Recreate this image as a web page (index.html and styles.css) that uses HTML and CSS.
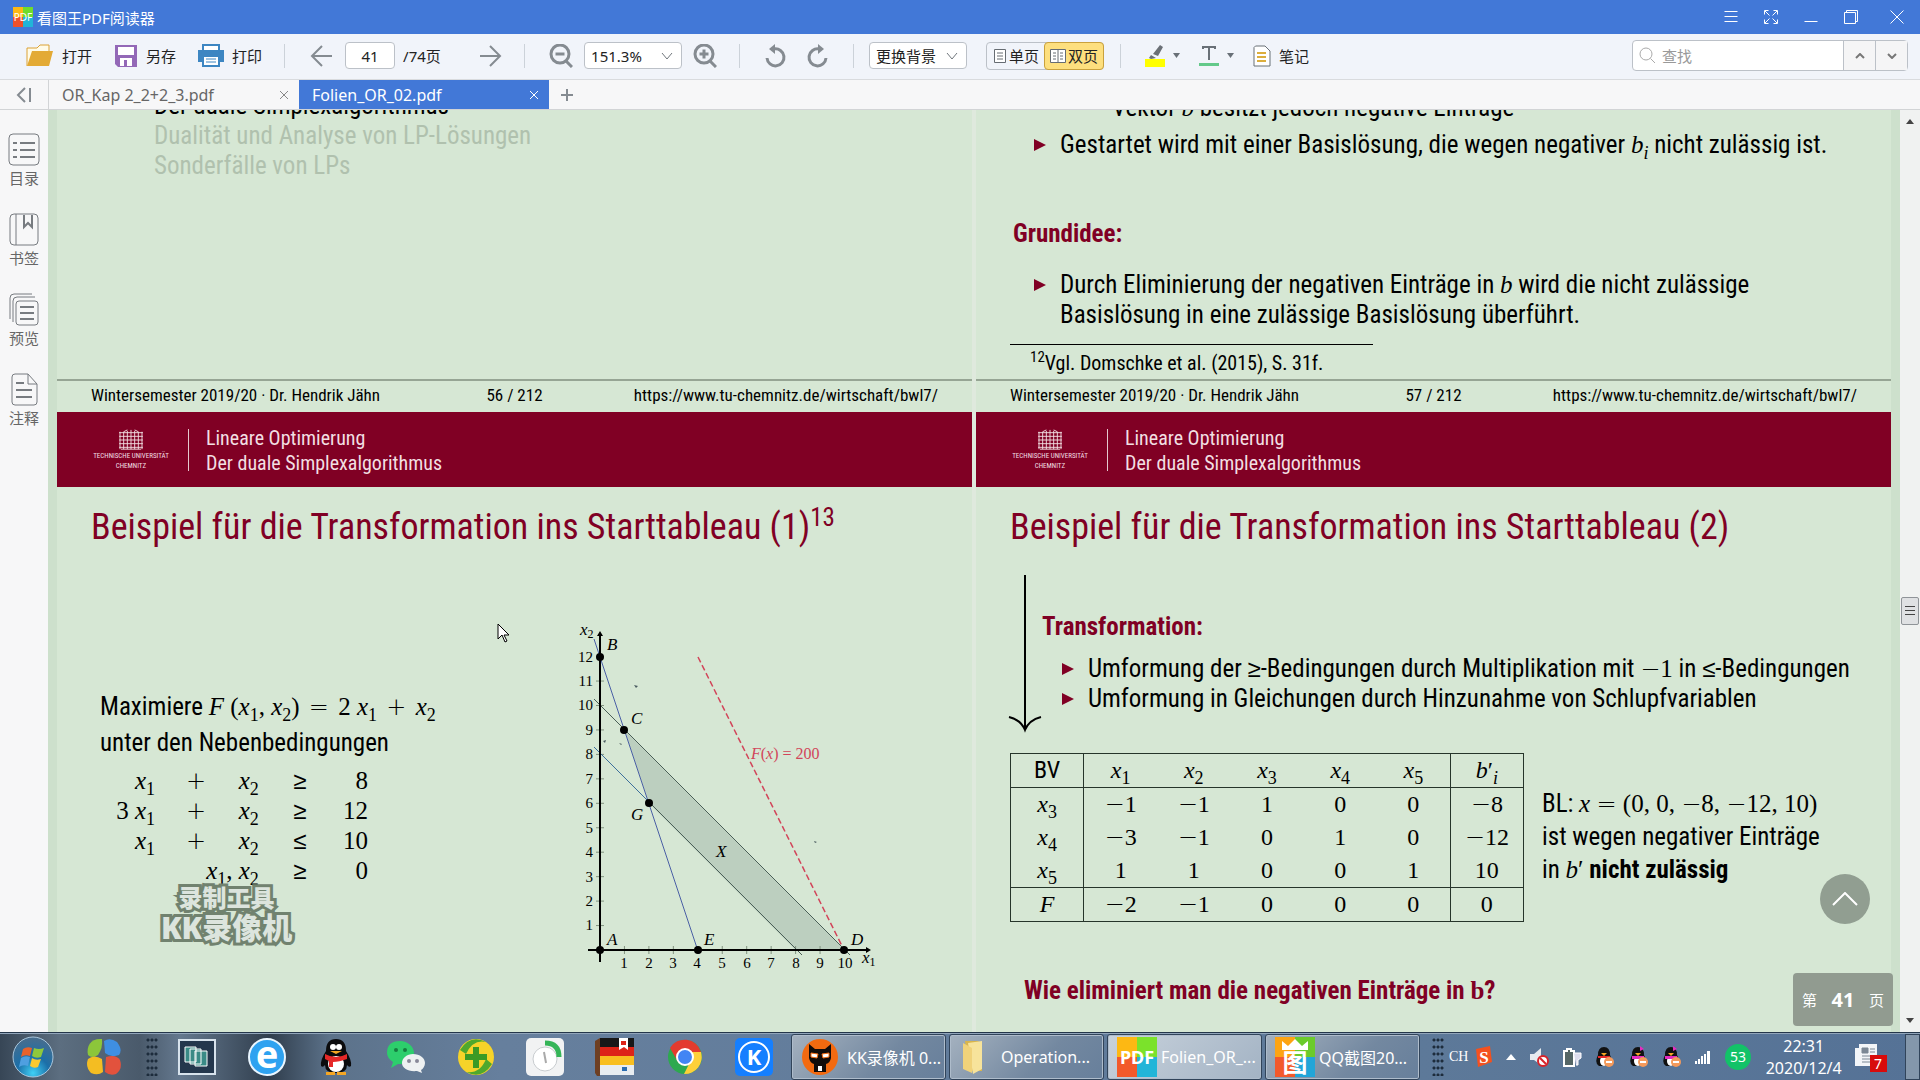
FILE: index.html
```html
<!DOCTYPE html>
<html lang="zh-CN">
<head>
    <meta charset="UTF-8">
    <meta name="viewport" content="width=device-width, initial-scale=1.0">
    <title>看图王PDF阅读器</title>
    <link rel="stylesheet" href="styles.css">
</head>
<body>
    <header class="titlebar">
        <svg class="app-icon" width="20" height="20" viewBox="0 0 20 20">
            <rect width="10" height="10" fill="#fdb813"/><rect x="10" width="10" height="10" fill="#6fdc2c"/>
            <rect y="10" width="10" height="10" fill="#f0512b"/><rect x="10" y="10" width="10" height="10" fill="#22b5d8"/>
            <text x="10" y="14" text-anchor="middle" font-size="10" fill="#fff">PDF</text>
        </svg>
        <h1>看图王PDF阅读器</h1>
        <div class="window-buttons">
            <button aria-label="菜单"><svg width="16" height="16" viewBox="0 0 16 16"><path d="M1.500 2.500h13M1.500 7.500h13M1.500 12.500h13"/></svg></button>
            <button aria-label="全屏"><svg width="16" height="16" viewBox="0 0 16 16"><path d="M1.500 5.500v-4h4M10.500 1.500h4v4M14.500 10.500v4h-4M5.500 14.500h-4v-4M2 2l4.500 4.500M14 2L9.500 6.500M2 14l4.500-4.500M14 14L9.500 9.500"/></svg></button>
            <button aria-label="最小化"><svg width="16" height="16" viewBox="0 0 16 16"><path d="M1.500 12.500h13"/></svg></button>
            <button aria-label="还原"><svg width="16" height="16" viewBox="0 0 16 16"><path d="M1.500 3.500h11v11h-11zM3.500 3.500v-2h11v11h-2"/></svg></button>
            <button class="close" aria-label="关闭"><svg width="16" height="16" viewBox="0 0 16 16"><path d="M1.500 1.500l13 13M14.500 1.500l-13 13"/></svg></button>
        </div>
    </header>

    <div class="toolbar">
        <button class="tool tool-file"><svg width="28" height="24" viewBox="0 0 28 24"><path d="M1 22V4h10l3-3h9v6" fill="#fffbe8" stroke="#dba235"/><path d="M6 7h21l-4 15H1z" fill="#e3aa35"/></svg>打开</button>
        <button class="tool tool-file"><svg width="24" height="24" viewBox="0 0 24 24"><path d="M1 1h22v22H4l-3-3z" fill="#9368b7"/><path d="M4 3h16v8H4z" fill="#fff"/><path d="M6 14h12v8H6z" fill="#fff"/><path d="M10 16h3v6h-3z" fill="#9368b7"/></svg>另存</button>
        <button class="tool tool-file"><svg width="26" height="24" viewBox="0 0 26 24"><path d="M5 6V1h16v5" fill="#fff" stroke="#3d86c2" stroke-width="2"/><path d="M0 6h26v12H0z" fill="#3d86c2"/><path d="M5 12h16v10H5z" fill="#fff" stroke="#3d86c2" stroke-width="2"/><path d="M8 15h10M8 18h10" stroke="#3d86c2"/></svg>打印</button>
        <span class="sep sep-file"></span>
        <button class="tool prev" aria-label="上一页"><svg class="line" width="24" height="24" viewBox="0 0 24 24"><path d="M12 2L2 12l10 10M2 12h20"/></svg></button>
        <label class="page-number"><input type="text" value="41" aria-label="页码"><span>/74页</span></label>
        <button class="tool next" aria-label="下一页"><svg class="line" width="24" height="24" viewBox="0 0 24 24"><path d="M12 2l10 10-10 10M22 12H2"/></svg></button>
        <span class="sep sep-next"></span>
        <button class="tool" aria-label="缩小"><svg class="line thick" width="24" height="24" viewBox="0 0 24 24"><circle cx="11" cy="10" r="9"/><path d="M6.500 10h9M17 17l6 6"/></svg></button>
        <span class="select-wrap">
            <select aria-label="缩放比例"><option>151.3%</option></select>
            <svg width="12" height="8" viewBox="0 0 12 8"><path d="M1 1l5 6 5-6"/></svg>
        </span>
        <button class="tool" aria-label="放大"><svg class="line thick" width="24" height="24" viewBox="0 0 24 24"><circle cx="11" cy="10" r="9"/><path d="M6.500 10h9M11 5.500v9M17 17l6 6"/></svg></button>
        <span class="sep sep-zoom"></span>
        <button class="tool rotate" aria-label="向左旋转"><svg class="line thick" width="22" height="24" viewBox="0 0 22 24"><path d="M9 5a8.500 8.500 0 1 1-7 9"/><path class="solid" d="M10 0v10L4 5z"/></svg></button>
        <button class="tool rotate" aria-label="向右旋转"><svg class="line thick" width="22" height="24" viewBox="0 0 22 24"><path d="M13 5a8.500 8.500 0 1 0 7 9"/><path class="solid" d="M12 0v10l6-5z"/></svg></button>
        <span class="sep sep-rotate"></span>
        <span class="select-wrap">
            <select aria-label="更换背景"><option>更换背景</option></select>
            <svg width="12" height="8" viewBox="0 0 12 8"><path d="M1 1l5 6 5-6"/></svg>
        </span>
        <div class="page-mode">
            <button><svg width="14" height="16" viewBox="0 0 14 16"><path d="M1.500 1.500h11v13h-11zM4 5h6M4 8h6M4 11h6"/></svg>单页</button>
            <button class="active"><svg width="16" height="16" viewBox="0 0 16 16"><path d="M.5 1.500h15v13H.5zM8 1.500v13M3 5h3M3 8h3M3 11h3M10 5h3M10 8h3M10 11h3"/></svg>双页</button>
        </div>
        <span class="sep sep-mode"></span>
        <button class="tool mark" aria-label="高亮"><svg width="20" height="24" viewBox="0 0 20 24"><path d="M8 10l7-9 3 2-5 9zM6 11l5 3-5 1-2-1z" fill="#6b7076"/><path d="M0 15h20v8H0z" fill="#ff0"/></svg><svg width="7" height="5" viewBox="0 0 7 5"><path d="M0 0h7L3.500 5z" fill="#697077"/></svg></button>
        <button class="tool mark" aria-label="文字"><svg width="20" height="24" viewBox="0 0 20 24"><path d="M4 5V3h12v2M10 3v13" fill="none" stroke="#697077" stroke-width="2"/><path d="M0 19h20v3H0z" fill="#63c98a"/></svg><svg width="7" height="5" viewBox="0 0 7 5"><path d="M0 0h7L3.500 5z" fill="#697077"/></svg></button>
        <button class="tool note"><svg width="18" height="22" viewBox="0 0 18 22"><path d="M1 2.500L2.500 1H12l5 5v15H1z" fill="#fff" stroke="#697077"/><path d="M4 8h9M4 12h9M4 16h9" stroke="#dcae3c" stroke-width="2"/></svg>笔记</button>
        <div class="search">
            <svg width="17" height="17" viewBox="0 0 17 17"><circle cx="7" cy="7" r="6"/><path d="M11.500 11.500L16 16"/></svg>
            <input type="text" placeholder="查找" aria-label="查找">
            <button aria-label="上一个"><svg width="10" height="6" viewBox="0 0 10 6"><path d="M1 5l4-4 4 4"/></svg></button>
            <button aria-label="下一个"><svg width="10" height="6" viewBox="0 0 10 6"><path d="M1 1l4 4 4-4"/></svg></button>
        </div>
    </div>

    <nav class="tabs">
        <button class="collapse" aria-label="收起"><svg class="line" width="16" height="16" viewBox="0 0 16 16"><path d="M9 1L2 8l7 7M14 1v14"/></svg></button>
        <div class="tab"><a href="#">OR_Kap 2_2+2_3.pdf</a><button aria-label="关闭标签"><svg width="10" height="10" viewBox="0 0 10 10"><path d="M1 1l8 8M9 1L1 9"/></svg></button></div>
        <div class="tab active"><a href="#">Folien_OR_02.pdf</a><button aria-label="关闭标签"><svg width="10" height="10" viewBox="0 0 10 10"><path d="M1 1l8 8M9 1L1 9"/></svg></button></div>
        <button class="new-tab" aria-label="新标签"><svg class="line" width="14" height="14" viewBox="0 0 14 14"><path d="M7 1v12M1 7h12"/></svg></button>
    </nav>

    <main>
        <aside class="sidebar">
            <button><svg width="32" height="34" viewBox="0 0 32 34"><rect x="1" y="1" width="30" height="31" rx="4"/><path class="bold" d="M5 10h4M5 17h4M5 24h4M12 10h15M12 17h15M12 24h15"/></svg>目录</button>
            <button><svg width="32" height="34" viewBox="0 0 32 34"><rect x="2" y="1" width="28" height="31" rx="4"/><path d="M8 1v31"/><path class="bold" d="M16 2v12l4-4 4 4V2"/></svg>书签</button>
            <button><svg width="32" height="34" viewBox="0 0 32 34"><rect x="8" y="8" width="22" height="24" rx="3"/><path d="M5 29V8q0-4 4-4h18M2 26V5q0-4 4-4h18"/><path class="bold" d="M12 14h14M12 20h14M12 26h14"/></svg>预览</button>
            <button><svg width="32" height="34" viewBox="0 0 32 34"><path d="M7 1h13l9 10v18q0 3-3 3H7q-3 0-3-3V4q0-3 3-3zM20 1v10h9"/><path class="bold" d="M8 10h8M8 17h16M8 24h16"/></svg>注释</button>
        </aside>

        <div class="viewer">
            <div class="slides">
                <section class="slide">
                    <div class="outline">
                        <p class="current">Der duale Simplexalgorithmus</p>
                        <p>Dualität und Analyse von LP-Lösungen</p>
                        <p>Sonderfälle von LPs</p>
                    </div>
                    <footer class="slide-footer"><span>Wintersemester 2019/20 · Dr. Hendrik Jähn</span><span>56 / 212</span><a href="#">https://www.tu-chemnitz.de/wirtschaft/bwl7/</a></footer>
                </section>

                <section class="slide">
                    <div class="idea">
                        <p class="nested">Vektor <i>b</i> besitzt jedoch negative Einträge</p>
                        <ul><li>Gestartet wird mit einer Basislösung, die wegen negativer <i>b<sub>i</sub></i> nicht zulässig ist.</li></ul>
                        <h3>Grundidee:</h3>
                        <ul><li>Durch Eliminierung der negativen Einträge in <i>b</i> wird die nicht zulässige<br>Basislösung in eine zulässige Basislösung überführt.</li></ul>
                        <p class="footnote"><sup>12</sup>Vgl. Domschke et al. (2015), S. 31f.</p>
                    </div>
                    <footer class="slide-footer"><span>Wintersemester 2019/20 · Dr. Hendrik Jähn</span><span>57 / 212</span><a href="#">https://www.tu-chemnitz.de/wirtschaft/bwl7/</a></footer>
                </section>

                <section class="slide slide-example">
                    <header class="slide-header">
                        <div class="uni"><svg width="28" height="24" viewBox="0 0 28 24"><path d="M1 4h26M1 8h26M1 12h26M1 16h26M1 20h26M2 3v19M6 3v19M10 2v20M14 1v21M18 2v20M22 3v19M26 3v19M6 3l4-2M18 1l4 2M3 22h22"/></svg><span>TECHNISCHE UNIVERSITÄT<br>CHEMNITZ</span></div>
                        <p>Lineare Optimierung<br>Der duale Simplexalgorithmus</p>
                    </header>
                    <h2>Beispiel für die Transformation ins Starttableau (1)<sup>13</sup></h2>
                    <div class="example">
                        <div class="model">
                            <p>Maximiere <span class="math"><i>F</i> (<i>x</i><sub>1</sub>, <i>x</i><sub>2</sub>) <span class="op">=</span> 2 <i>x</i><sub>1</sub> <span class="op">+</span> <i>x</i><sub>2</sub></span></p>
                            <p>unter den Nebenbedingungen</p>
                            <table class="constraints math">
                                <tr><td><i>x</i><sub>1</sub></td><td class="rel">+</td><td><i>x</i><sub>2</sub></td><td class="rel">≥</td><td>8</td></tr>
                                <tr><td>3 <i>x</i><sub>1</sub></td><td class="rel">+</td><td><i>x</i><sub>2</sub></td><td class="rel">≥</td><td>12</td></tr>
                                <tr><td><i>x</i><sub>1</sub></td><td class="rel">+</td><td><i>x</i><sub>2</sub></td><td class="rel">≤</td><td>10</td></tr>
                                <tr><td colspan="3"><i>x</i><sub>1</sub>, <i>x</i><sub>2</sub></td><td class="rel">≥</td><td>0</td></tr>
                            </table>
                        </div>
                        <!-- one unit on either axis is 24.45, origin at (30, 330) -->
                        <svg class="chart" width="310" height="360" viewBox="0 0 310 360">
                            <path d="M54.450 110L78.900 183.300 225.600 330H274.500z" fill="#bccfbf"/>
                            <g class="ticks">
                                <path d="M54.450 326v8M78.900 326v8M103.350 326v8M127.800 326v8M152.250 326v8M176.700 326v8M201.150 326v8M225.600 326v8M250.050 326v8M274.500 326v8"/>
                                <path d="M26 305.550h8M26 281.100h8M26 256.650h8M26 232.200h8M26 207.750h8M26 183.300h8M26 158.850h8M26 134.400h8M26 109.950h8M26 85.500h8M26 61.050h8M26 36.600h8"/>
                            </g>
                            <path d="M24 79L280 335M24 127L232 335" stroke="#4a5f57"/>
                            <path d="M24 127L79 182" stroke="#3c6f9b"/>
                            <path d="M24 19L129 334" stroke="#4a5fa5"/>
                            <path d="M128 37L276 334" stroke="#d2455a" stroke-width="1.500" stroke-dasharray="6 3"/>
                            <path d="M18 330H297M30 342V15" stroke="#000" stroke-width="2"/>
                            <path d="M296 327l5 3-5 3zM27 16l3-5 3 5z"/>
                            <circle cx="30" cy="330" r="4"/><circle cx="30" cy="37" r="4"/><circle cx="54" cy="110" r="4"/>
                            <circle cx="79" cy="183" r="4"/><circle cx="128" cy="330" r="4"/><circle cx="274" cy="330" r="4"/>
                            <g class="numbers" text-anchor="middle">
                                <text x="54" y="348">1</text><text x="79" y="348">2</text><text x="103" y="348">3</text><text x="127" y="348">4</text><text x="152" y="348">5</text><text x="177" y="348">6</text><text x="201" y="348">7</text><text x="226" y="348">8</text><text x="250" y="348">9</text><text x="275" y="348">10</text>
                            </g>
                            <g class="numbers" text-anchor="end">
                                <text x="23" y="310">1</text><text x="23" y="286">2</text><text x="23" y="262">3</text><text x="23" y="237">4</text><text x="23" y="213">5</text><text x="23" y="188">6</text><text x="23" y="164">7</text><text x="23" y="139">8</text><text x="23" y="115">9</text><text x="23" y="90">10</text><text x="23" y="66">11</text><text x="23" y="42">12</text>
                            </g>
                            <g class="points">
                                <text x="10" y="15">x<tspan class="index" dy="3">2</tspan></text><text x="292" y="343">x<tspan class="index" dy="3">1</tspan></text>
                                <text x="37" y="30">B</text><text x="61" y="104">C</text><text x="61" y="200">G</text><text x="37" y="325">A</text><text x="134" y="325">E</text><text x="281" y="325">D</text><text x="146" y="237">X</text>
                            </g>
                            <text class="goal" x="181" y="139"><tspan font-style="italic">F</tspan>(<tspan font-style="italic">x</tspan>) = 200</text>
                            <path d="M64 65l4 1-2 2zM33 121l3-1-1 3zM49 123l3 1-1 1zM244 221l3 1-2 1z" fill="#4b5c60"/>
                        </svg>
                    </div>
                </section>

                <section class="slide slide-example">
                    <header class="slide-header">
                        <div class="uni"><svg width="28" height="24" viewBox="0 0 28 24"><path d="M1 4h26M1 8h26M1 12h26M1 16h26M1 20h26M2 3v19M6 3v19M10 2v20M14 1v21M18 2v20M22 3v19M26 3v19M6 3l4-2M18 1l4 2M3 22h22"/></svg><span>TECHNISCHE UNIVERSITÄT<br>CHEMNITZ</span></div>
                        <p>Lineare Optimierung<br>Der duale Simplexalgorithmus</p>
                    </header>
                    <h2>Beispiel für die Transformation ins Starttableau (2)</h2>
                    <div class="transformation">
                        <svg width="34" height="158" viewBox="0 0 34 158"><path d="M17 0v154M1 142q12 3 16 13 4-10 16-13"/></svg>
                        <div>
                            <h3>Transformation:</h3>
                            <ul>
                                <li>Umformung der <span class="math"><span class="sign">≥</span></span>-Bedingungen durch Multiplikation mit <span class="math"><span class="sign">−</span>1</span> in <span class="math"><span class="sign">≤</span></span>-Bedingungen</li>
                                <li>Umformung in Gleichungen durch Hinzunahme von Schlupfvariablen</li>
                            </ul>
                        </div>
                    </div>
                    <div class="result">
                        <table class="tableau math">
                            <tr class="ruled"><th class="basis">BV</th><th><i>x</i><sub>1</sub></th><th><i>x</i><sub>2</sub></th><th><i>x</i><sub>3</sub></th><th><i>x</i><sub>4</sub></th><th><i>x</i><sub>5</sub></th><th><i>b</i>′<sub><i>i</i></sub></th></tr>
                            <tr><td><i>x</i><sub>3</sub></td><td><span class="sign">−</span>1</td><td><span class="sign">−</span>1</td><td>1</td><td>0</td><td>0</td><td><span class="sign">−</span>8</td></tr>
                            <tr><td><i>x</i><sub>4</sub></td><td><span class="sign">−</span>3</td><td><span class="sign">−</span>1</td><td>0</td><td>1</td><td>0</td><td><span class="sign">−</span>12</td></tr>
                            <tr class="ruled"><td><i>x</i><sub>5</sub></td><td>1</td><td>1</td><td>0</td><td>0</td><td>1</td><td>10</td></tr>
                            <tr><td><i>F</i></td><td><span class="sign">−</span>2</td><td><span class="sign">−</span>1</td><td>0</td><td>0</td><td>0</td><td>0</td></tr>
                        </table>
                        <p>BL: <span class="math"><i>x</i> <span class="sign">=</span> (0, 0, <span class="sign">−</span>8, <span class="sign">−</span>12, 10)</span><br>ist wegen negativer Einträge<br>in <span class="math"><i>b</i>′</span> <strong>nicht zulässig</strong></p>
                    </div>
                    <h3 class="question">Wie eliminiert man die negativen Einträge in <span class="math">b</span>?</h3>
                </section>
            </div>

            <div class="watermark"><span>录制工具</span><strong>KK录像机</strong></div>
            <svg class="cursor" width="13" height="20" viewBox="0 0 13 20"><path d="M1 1v15l4-4 3 7 2-1-3-6h5z" fill="#fff" stroke="#000"/></svg>
            <button class="to-top" aria-label="回到顶部"><svg width="26" height="14" viewBox="0 0 26 14"><path d="M1 13L13 1l12 12"/></svg></button>
            <div class="page-badge"><span>第</span><strong>41</strong><span>页</span></div>
        </div>

        <div class="scrollbar">
            <svg width="10" height="6" viewBox="0 0 10 6"><path d="M1 6l4-5 4 5z"/></svg>
            <div class="thumb"><svg width="10" height="10" viewBox="0 0 10 10"><path d="M0 0h10v1H0zM0 4h10v1H0zM0 8h10v1H0z"/></svg></div>
            <svg width="10" height="6" viewBox="0 0 10 6"><path d="M1 0l4 5 4-5z"/></svg>
        </div>
    </main>

    <footer class="taskbar">
        <button class="start" aria-label="开始"><svg width="44" height="42" viewBox="0 0 44 42">
            <defs><radialGradient id="orb" cx=".5" cy=".9" r=".9"><stop offset="0" stop-color="#3fd0f5"/><stop offset=".45" stop-color="#1c6fa8"/><stop offset="1" stop-color="#4a6d8c"/></radialGradient></defs>
            <circle cx="22" cy="21" r="20" fill="url(#orb)" stroke="#a9c6dc"/>
            <path d="M12 13q4-3 9-1l-2 8q-5-2-9 1z" fill="#e8622c"/><path d="M23 12q5 2 10 0l-3 9q-5 2-9-1z" fill="#8fc93c"/>
            <path d="M10 22q4-3 9-1l-2 9q-5-2-9 1z" fill="#4f9fe0"/><path d="M21 22q4 3 9 1l-3 8q-4 2-8-1z" fill="#fbc92e"/>
        </svg></button>
        <button class="start" aria-label="桌面助手"><svg width="36" height="38" viewBox="0 0 36 38"><path d="M16 1C5 0 0 8 2 17q4 4 10 0 5-7 4-16z" fill="#8cc63a"/><path d="M18 3q6-4 13 1 6 8 2 13-8 3-14-2z" fill="#3f8fe2"/><path d="M16 21q-8-5-14 0-3 8 3 14 7 3 12-1z" fill="#f4bd22"/><path d="M20 19q10-3 14 3 3 9-4 14-6 2-11-2z" fill="#e2523d"/></svg></button>
        <span class="grip"></span>
        <div class="pinned">
            <button aria-label="窗口切换"><svg width="38" height="36" viewBox="0 0 38 36"><path d="M1 1h36v34H1z" fill="#24374d" stroke="#d7e2ec" stroke-width="2"/><path d="M7 8h11v15H7zM12 10h11v15H12zM17 12h12v15H17z" fill="#3a8a86" stroke="#fff"/></svg></button>
            <button aria-label="浏览器"><svg width="38" height="38" viewBox="0 0 38 38"><circle cx="19" cy="19" r="18" fill="#2ea2f0" stroke="#eaf6ff" stroke-width="2"/><text x="19" y="30" text-anchor="middle" font-size="38" font-weight="bold" fill="#fff">e</text></svg></button>
            <button aria-label="QQ"><svg width="34" height="38" viewBox="0 0 34 38"><path d="M17 1q10 0 10 12 6 9 5 15-2 2-4-1 0 8-11 8T6 27q-2 3-4 1-1-6 5-15Q7 1 17 1z" fill="#0b0b0d"/><ellipse cx="17" cy="26" rx="8" ry="8" fill="#fff"/><path d="M6 16q11 6 22 0v5q-8 3-14 3v5h-4v-6l-4-2z" fill="#e62828"/><circle cx="14" cy="9" r="3" fill="#fff"/><circle cx="20" cy="9" r="3" fill="#fff"/><path d="M11 13h12l-6 3z" fill="#f5a623"/><path d="M7 34h9v3H7zM18 34h9v3h-9z" fill="#f5a623"/></svg></button>
            <button aria-label="微信"><svg width="40" height="34" viewBox="0 0 40 34"><path d="M14 1c8 0 14 6 14 12s-6 12-16 11l-7 4 2-6Q1 18 1 13 1 1 14 1z" fill="#2dce6c"/><circle cx="10" cy="10" r="2" fill="#167c40"/><circle cx="19" cy="10" r="2" fill="#167c40"/><path d="M27 14c7 0 12 4 12 9 0 3-2 6-4 7l1 3-5-2c-9 1-15-3-15-8s5-9 11-9z" fill="#eef1f2"/><circle cx="23" cy="21" r="2" fill="#889"/><circle cx="31" cy="21" r="2" fill="#889"/></svg></button>
            <button aria-label="安全卫士"><svg width="40" height="38" viewBox="0 0 40 38"><circle cx="20" cy="19" r="18" fill="#f6d329"/><path d="M4 12Q14-4 30 4 17 1 10 16zM36 26Q26 42 10 34q14 2 20-13z" fill="#4fa82d"/><path d="M17 9h6v7h8v6h-8v8h-6v-8H9v-6h8z" fill="#3b9a25"/></svg></button>
            <button aria-label="磁盘"><svg width="38" height="38" viewBox="0 0 38 38"><rect width="38" height="38" rx="5" fill="#f1f2f3"/><circle cx="19" cy="21" r="12" fill="#fff" stroke="#c8cccf"/><path d="M19 5q14 0 14 14" fill="none" stroke="#35b558" stroke-width="5"/><path d="M18 14l2 11" stroke="#aaa" stroke-width="2"/></svg></button>
            <button aria-label="德语词典"><svg width="40" height="38" viewBox="0 0 40 38"><path d="M5 0h34v10H5z" fill="#181818"/><path d="M5 9h34v9H5z" fill="#dd2418"/><path d="M5 18h34v9H5z" fill="#f8bf20"/><path d="M5 27h34v10H5z" fill="#e8edf0"/><path d="M0 3l5-3v38H2l-2-3z" fill="#6e3f22"/><path d="M24 0h9v12l-4-3-5 3z" fill="#fff"/><path d="M26 3h5v4h-5z" fill="#dd2418"/><path d="M27 29h5v4h-5z" fill="#2a6cb0"/></svg></button>
            <button aria-label="Chrome"><svg width="36" height="36" viewBox="0 0 36 36"><circle cx="18" cy="18" r="17" fill="#2da94f"/><path d="M3 9a17 17 0 0 1 31 4H18L11 23z" fill="#e33b2e"/><path d="M34 13a17 17 0 0 1-17 22l7-14-6-8z" fill="#fdd03a"/><circle cx="18" cy="18" r="8" fill="#4285f4" stroke="#fff" stroke-width="2"/></svg></button>
            <button aria-label="酷狗音乐"><svg width="38" height="38" viewBox="0 0 38 38"><rect width="38" height="38" rx="5" fill="#157fff"/><circle cx="19" cy="19" r="15" fill="none" stroke="#fff" stroke-width="2"/><text x="19" y="27" text-anchor="middle" font-size="22" font-weight="bold" fill="#fff">K</text></svg></button>
        </div>
        <div class="tasks">
            <button><svg width="38" height="38" viewBox="0 0 38 38"><circle cx="19" cy="19" r="18" fill="#f36a10"/><path d="M8 6l6 5h10l6-5v14q-1 5-5 6v8H13v-8q-4-1-5-6z" fill="#120c0a"/><path d="M10 15l7 1-1 4-6-1zM28 15l-7 1 1 4 6-1z" fill="#fff" stroke="#f36a10"/><path d="M17 28h4v5h-4z" fill="#fff"/></svg><span>KK录像机 0...</span></button>
            <button><svg width="34" height="36" viewBox="0 0 34 36"><path d="M6 2h13l4 4v26H10z" fill="#d9b54c"/><path d="M9 4l14-2v28l-9 5z" fill="#f7e39b"/><path d="M4 4l9 5v25l-9-4z" fill="#f0d27a"/></svg><span>Operation...</span></button>
            <button class="active"><svg width="40" height="40" viewBox="0 0 40 40"><path d="M0 0h20v20H0z" fill="#fdb813"/><path d="M20 0h20v20H20z" fill="#7be22b"/><path d="M0 20h20v20H0z" fill="#f2592b"/><path d="M20 20h20v20H20z" fill="#22b5d8"/><text x="20" y="27" text-anchor="middle" font-size="18" font-weight="bold" fill="#fff">PDF</text></svg><span>Folien_OR_...</span></button>
            <button><svg width="40" height="40" viewBox="0 0 40 40"><path d="M0 0h20v20H0z" fill="#fda413"/><path d="M20 0h20v20H20z" fill="#6bcb2b"/><path d="M0 20h20v20H0z" fill="#f2592b"/><path d="M20 20h20v20H20z" fill="#22a5d8"/><path d="M7 4l6 5 7-7 7 7 6-5v9H7z" fill="#fff"/><text x="20" y="35" text-anchor="middle" font-size="25" font-weight="bold" fill="#fff">图</text></svg><span>QQ截图20...</span></button>
        </div>
        <span class="grip tray-grip"></span>
        <div class="tray">
            <span class="ime">CH <svg width="18" height="22" viewBox="0 0 18 22"><path d="M2 3l14-3 2 16-14 5z" fill="#f4511e"/><text x="10" y="17" text-anchor="middle" font-size="17" font-weight="bold" fill="#fff">S</text></svg></span>
            <svg class="up" width="10" height="6" viewBox="0 0 10 6"><path d="M0 6l5-6 5 6z" fill="#fff"/></svg>
            <svg width="20" height="20" viewBox="0 0 20 20"><path d="M1 7h4l7-6v17l-7-5H1z" fill="#e6ebf0"/><circle cx="14" cy="14" r="5" fill="#fff" stroke="#d8232a" stroke-width="2"/><path d="M11 11l6 6" stroke="#d8232a" stroke-width="2"/></svg>
            <svg width="20" height="20" viewBox="0 0 20 20"><path d="M2 4h3V2h4v2h3v15H2z" fill="#566" stroke="#fff" stroke-width="2"/><path d="M12 6h7v5l-3 2v5h-2" fill="#dde" stroke="#fff"/></svg>
            <svg width="20" height="22" viewBox="0 0 20 22"><path d="M9 1q6 0 6 8 4 8 0 11H4Q-1 17 3 9q0-8 6-8z" fill="#111"/><ellipse cx="9" cy="15" rx="4" ry="5" fill="#fff"/><path d="M6 7h6l-3 3z" fill="#f5a623"/><path d="M3 10h12v2H3z" fill="#e62828"/><circle cx="14" cy="16" r="5" fill="#f59a5b"/><path d="M11 16h6" stroke="#fff" stroke-width="2"/></svg>
            <svg width="20" height="22" viewBox="0 0 20 22"><path d="M9 1q6 0 6 8 4 8 0 11H4Q-1 17 3 9q0-8 6-8z" fill="#111"/><ellipse cx="9" cy="15" rx="4" ry="5" fill="#fff"/><path d="M6 7h6l-3 3z" fill="#f5a623"/><path d="M3 10h12v3H3zM11 0l4 3-4 2z" fill="#e62cc0"/><circle cx="14" cy="16" r="5" fill="#f59a5b"/><path d="M11 16h6" stroke="#fff" stroke-width="2"/></svg>
            <svg width="20" height="22" viewBox="0 0 20 22"><path d="M9 1q6 0 6 8 4 8 0 11H4Q-1 17 3 9q0-8 6-8z" fill="#111"/><ellipse cx="9" cy="15" rx="4" ry="5" fill="#fff"/><path d="M6 7h6l-3 3z" fill="#f5a623"/><path d="M3 10h12v3H3zM11 0l4 3-4 2z" fill="#e62cc0"/><circle cx="14" cy="16" r="5" fill="#f59a5b"/><path d="M11 16h6" stroke="#fff" stroke-width="2"/></svg>
            <svg width="16" height="14" viewBox="0 0 16 14"><path d="M0 11h2v3H0zM3 9h2v5H3zM6 6h2v8H6zM9 4h2v10H9zM12 1h3v13h-3z" fill="#fff"/></svg>
            <svg class="level" width="28" height="28" viewBox="0 0 28 28"><circle cx="14" cy="14" r="13" fill="#12c268"/><text x="14" y="19" text-anchor="middle" font-size="14" fill="#fff">53</text></svg>
            <time>22:31<br>2020/12/4</time>
            <svg width="32" height="32" viewBox="0 0 32 32"><path d="M4 3h18v22H0V7h4z" fill="#f2f5f8"/><path d="M7 7h6v5H7zM15 8h5M15 11h5M7 15h13M7 18h13M7 21h13" fill="#7b8794" stroke="#7b8794"/><path d="M15 14h17v17H15z" fill="#d80b0b"/><text x="23" y="28" text-anchor="middle" font-size="14" fill="#fff">7</text></svg>
        </div>
        <button class="show-desktop" aria-label="显示桌面"></button>
    </footer>
</body>
</html>
```

FILE: styles.css
```css
* { box-sizing: border-box; margin: 0; padding: 0; }
body { height: 100vh; display: flex; flex-direction: column; overflow: hidden; background: #f7f7f8; font-family: "Noto Sans", "Noto Sans CJK SC", sans-serif; font-size: 15px; color: #222; }
button, input, select { font: inherit; color: inherit; background: none; border: none; }
button { display: flex; align-items: center; justify-content: center; cursor: pointer; }
a { color: inherit; text-decoration: none; }
svg { flex: none; }
ul { list-style: none; }

/* window frame */
.titlebar { display: flex; align-items: center; height: 34px; padding: 0 15px 0 13px; background: #4278d7; color: #fff; }
.titlebar h1 { flex: 1; margin-left: 4px; font-size: 15px; font-weight: normal; }
.window-buttons { display: flex; gap: 24px; }
.window-buttons .close { margin-left: 6px; }
.window-buttons svg { fill: none; stroke: #fff; }

.toolbar { display: flex; align-items: center; height: 45px; padding: 0 12px 2px 26px; background: #f1f4fa; }
.tool-file { gap: 8px; margin-right: 22px; }
.sep { width: 1px; height: 24px; background: #ccd2d9; }
.sep-file { margin-right: 25px; }
.line { fill: none; stroke: #858b91; stroke-width: 2; }
.thick { stroke-width: 3; }
.solid { fill: #858b91; stroke: none; }
.page-number { display: flex; align-items: center; gap: 8px; width: 122px; margin: 0 11px; font-size: 15px; }
.page-number input { width: 50px; height: 27px; border: 1px solid #bcc1c8; border-radius: 4px; background: #fff; text-align: center; }
.sep-next { margin: 0 24px 0 22px; }
.select-wrap { position: relative; width: 98px; height: 27px; margin: 0 11px; }
.select-wrap select { appearance: none; width: 100%; height: 100%; padding-left: 6px; border: 1px solid #bcc1c8; border-radius: 4px; background: #fff; }
.select-wrap svg { position: absolute; right: 9px; top: 10px; fill: none; stroke: #71777d; }
.sep-zoom { margin: 0 25px 0 22px; }
.rotate { margin-right: 19px; }
.sep-rotate { margin: 0 4px 0 6px; }
.page-mode { display: flex; width: 118px; height: 28px; margin-left: 8px; border: 1px solid #bcc1c8; border-radius: 4px; }
.page-mode button { flex: 1; gap: 2px; font-size: 15px; }
.page-mode .active { margin: -1px; border: 1px solid #c9a13d; border-radius: 4px; background: #fddf7e; }
.page-mode svg { fill: #fff; stroke: #666c72; }
.sep-mode { margin: 0 24px 0 16px; }
.mark { gap: 8px; margin-right: 19px; }
.note { gap: 8px; }
.search { display: flex; align-items: center; width: 276px; height: 31px; margin-left: auto; border: 1px solid #bcc1c8; border-radius: 4px; background: #fff; }
.search svg { margin: 0 6px; fill: none; stroke: #aaa; }
.search input { flex: 1; min-width: 0; }
.search input::placeholder { color: #999; }
.search button { width: 32px; height: 100%; border-left: 1px solid #bcc1c8; background: #f5f5f6; }
.search button svg { stroke: #777; stroke-width: 2; }

.tabs { display: flex; height: 31px; border-top: 1px solid #d9dbde; border-bottom: 1px solid #d2d4d6; background: #f7f7f8; }
.collapse { width: 49px; border-right: 1px solid #d2d4d6; }
.tab { display: flex; align-items: center; justify-content: space-between; width: 250px; padding: 0 10px 0 13px; font-size: 16px; color: #666; }
.tab svg { fill: none; stroke: #888; }
.tab.active { background: #4278d7; color: #fff; }
.tab.active svg { stroke: #fff; }
.new-tab { width: 36px; }

main { flex: 1; display: flex; min-height: 0; }
.sidebar { display: flex; flex-direction: column; gap: 24px; width: 48px; padding-top: 23px; background: #f7f7f8; }
.sidebar button { flex-direction: column; height: 56px; color: #666; line-height: 22px; }
.sidebar svg { fill: none; stroke: #777b80; }
.sidebar .bold { stroke-width: 2; }

/* document */
.viewer { position: relative; flex: 1; overflow: hidden; padding: 0 9px; background: #cde0cc; }
.slides { display: grid; grid-template-columns: 1fr 1fr; grid-auto-rows: 686px; column-gap: 4px; margin-top: -384px; background: #dfe9dd; font-family: "Roboto Condensed", "Liberation Sans Narrow", Roboto, sans-serif; font-size: 25px; line-height: 30px; color: #000; }
.slide { display: flex; flex-direction: column; justify-content: flex-end; min-width: 0; background: #d6e7d4; white-space: nowrap; }
.slide-example { justify-content: flex-start; }
.slides i, .math { font-family: "Liberation Serif", serif; }
.slides sub, .slides sup { font-size: 18px; line-height: 0; }
.sign, .op, .rel { font-family: "DejaVu Sans Light", "DejaVu Sans", sans-serif; font-size: 24px; font-weight: 200; line-height: 0; }
.op { margin: 0 3px; }
.slides h3 { font-size: 25px; color: #800024; }
.outline { padding-left: 97px; margin-bottom: 198px; color: #b0c1ae; }
.outline .current { color: #000; }
.idea { padding-left: 34px; }
.idea .nested { padding-left: 102px; margin-bottom: 7px; }
.idea h3 { margin: 59px 0 21px 3px; }
.slides li { position: relative; padding-left: 46px; }
.slides li::before { content: ""; position: absolute; left: 20px; top: 9px; border-left: 12px solid #800024; border-top: 6px solid transparent; border-bottom: 6px solid transparent; }
.idea li { margin-left: 4px; }
.footnote { width: 363px; margin-top: 14px; padding: 3px 0 1px 20px; border-top: 1px solid #000; font-size: 20px; }
.slides .footnote sup { font-size: 15px; }
.slide-footer { display: grid; grid-template-columns: 1fr auto 1fr; height: 33px; padding: 0 34px; border-top: 2px solid #96a594; font-size: 17px; line-height: 28px; }
.slide-footer a { text-align: right; }
.slide-header { display: flex; align-items: center; height: 75px; padding-left: 34px; background: #800024; color: #f2dfe2; font-size: 20px; line-height: 25px; }
.uni { display: flex; flex-direction: column; align-items: center; width: 98px; height: 42px; padding-right: 17px; border-right: 1px solid #e5c8ce; font-size: 7px; line-height: 10px; text-align: center; }
.uni svg { height: 22px; fill: none; stroke: #f2dfe2; }
.slide-header p { padding: 2px 0 0 17px; }
.slide h2 { margin-top: 16px; padding-left: 34px; font-size: 36px; font-weight: normal; line-height: 48px; color: #800024; }
.slides h2 sup { font-size: 25px; }

.example { display: flex; gap: 70px; padding-left: 43px; }
.model { width: 400px; padding-top: 138px; line-height: 36px; }
.constraints { width: 268px; margin-top: 5px; border-collapse: collapse; line-height: 30px; text-align: right; }
.constraints tr { height: 30px; }
.constraints td:first-child { width: 55px; }
.constraints .rel { width: 82px; text-align: center; }
.chart { margin-top: 69px; font-family: "Liberation Serif", serif; }
.ticks { stroke: #82937f; }
.numbers { font-size: 15px; }
.points { font-size: 17px; font-style: italic; }
.index { font-size: 12px; font-style: normal; }
.goal { font-size: 16px; fill: #d2455a; }

.transformation { display: flex; margin: 24px 0 0 32px; }
.transformation svg { fill: none; stroke: #000; stroke-width: 2; }
.transformation h3 { margin: 37px 0 12px; }
.result { display: flex; gap: 18px; margin: 20px 0 0 34px; line-height: 33px; }
.result p { padding-top: 34px; }
.tableau { border: 1px solid #26352a; border-collapse: collapse; table-layout: fixed; width: 514px; text-align: center; font-size: 24px; }
.tableau th { font-weight: normal; }
.tableau .basis { font-family: "Roboto Condensed", "Liberation Sans Narrow", Roboto, sans-serif; }
.tableau td:first-child, .tableau th:first-child { border-right: 1px solid #26352a; }
.tableau td:last-child, .tableau th:last-child { border-left: 1px solid #26352a; }
.tableau .ruled { border-bottom: 1px solid #26352a; }
.question { margin: 54px 0 0 48px; }

/* things floating over the document */
.watermark { position: absolute; left: 113px; top: 773px; display: flex; flex-direction: column; align-items: center; color: #dce4dd; font-weight: 900; line-height: 30px; -webkit-text-stroke: 6px #71826f; paint-order: stroke fill; }
.watermark span { font-size: 24px; }
.watermark strong { font-size: 30px; font-weight: 900; }
.cursor { position: absolute; left: 449px; top: 513px; }
.to-top { position: absolute; right: 30px; top: 764px; width: 50px; height: 50px; border-radius: 50%; background: #919e91; }
.to-top svg { fill: none; stroke: #fff; stroke-width: 2; }
.page-badge { position: absolute; right: 7px; bottom: 6px; display: flex; align-items: center; justify-content: space-between; width: 100px; height: 53px; padding: 0 9px; border-radius: 4px; background: #919b90; color: #fff; }
.page-badge strong { font-size: 20px; }
.scrollbar { display: flex; flex-direction: column; align-items: center; justify-content: space-between; width: 20px; padding: 8px 0; background: #f0f2f1; fill: #444; }
.thumb { display: flex; align-items: center; justify-content: center; width: 18px; height: 28px; margin-top: 80px; border: 1px solid #8f9498; border-radius: 2px; background: #dfe1e3; }

/* taskbar */
.taskbar { display: flex; align-items: center; height: 48px; border-top: 1px solid #24364a; background: linear-gradient(90deg, #374656 0, #5c6e80 60px, #4a5a6b 140px, #64788e 180px, #303e4d 270px, #5c728a 330px, #667f9d 500px, #5d7999 1420px, #557296 1920px); box-shadow: inset 0 1px #91a5ba; color: #fff; }
.start { width: 66px; }
.start + .start { width: 76px; }
.grip { width: 12px; height: 38px; margin: 0 4px; background: radial-gradient(circle at 2px 2px, #1d2c3c 1px, transparent 2px) 0 0 / 4px 7px; }
.pinned { display: flex; width: 627px; }
.pinned button { flex: 1; }
.tasks { display: flex; gap: 3px; margin-left: 2px; }
.tasks button { justify-content: flex-start; gap: 8px; width: 155px; height: 46px; padding-left: 9px; border: 1px solid #31445a; border-radius: 3px; background: linear-gradient(135deg, #a4b1bf, #7388a0 60%, #677f9b); box-shadow: inset 0 0 0 1px #aebccb; font-size: 16px; white-space: nowrap; }
.tasks button.active { background: linear-gradient(135deg, #c8d2dc, #a3b3c4); }
.tasks button.active, .tasks button:last-child { gap: 4px; }
.tray-grip { margin: 0 0 0 12px; }
.tray { flex: 1; display: flex; align-items: center; justify-content: space-between; padding: 0 18px 0 5px; }
.ime { display: flex; align-items: center; gap: 6px; font-family: "Liberation Serif", serif; font-size: 14px; }
.tray time { font-size: 16px; line-height: 22px; text-align: center; }
.show-desktop { width: 15px; height: 46px; border: 1px solid #31445a; background: #8497ab; }
```
